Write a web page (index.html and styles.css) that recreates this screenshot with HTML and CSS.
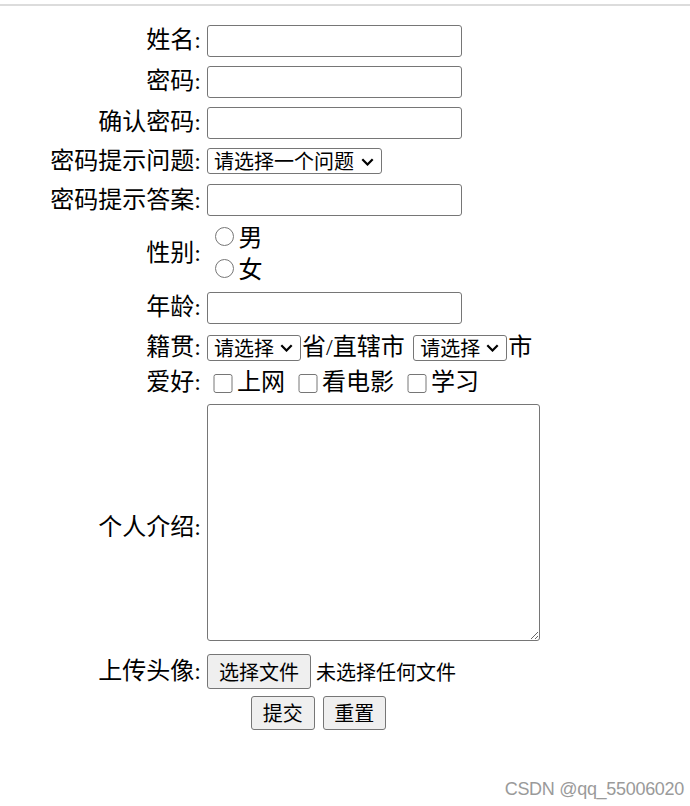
FILE: index.html
```html
<!DOCTYPE html>
<html lang="zh-CN">
<head>
<meta charset="utf-8">
<title>注册</title>
<link rel="stylesheet" href="styles.css">
</head>
<body>
<div class="top-rule"></div>
<form class="reg" action="#">
  <div class="lbl">姓名:</div>
  <div class="fld"><input class="txt" type="text"></div>

  <div class="lbl">密码:</div>
  <div class="fld"><input class="txt" type="password"></div>

  <div class="lbl">确认密码:</div>
  <div class="fld"><input class="txt" type="password"></div>

  <div class="lbl">密码提示问题:</div>
  <div class="fld">
    <span class="sel-box">
      <select class="sel sel-q"><option>请选择一个问题</option></select>
      <svg class="chev" width="13" height="8" viewBox="0 0 13 8" aria-hidden="true"><path d="M1.3 1.3 L6.5 6.5 L11.7 1.3" fill="none" stroke="#000" stroke-width="2.2"/></svg>
    </span>
  </div>

  <div class="lbl">密码提示答案:</div>
  <div class="fld"><input class="txt" type="text"></div>

  <div class="lbl">性别:</div>
  <div class="fld fld-col">
    <label class="radio-line"><input type="radio" name="sex">男</label>
    <label class="radio-line"><input type="radio" name="sex">女</label>
  </div>

  <div class="lbl">年龄:</div>
  <div class="fld"><input class="txt" type="text"></div>

  <div class="lbl">籍贯:</div>
  <div class="fld">
    <span class="sel-box">
      <select class="sel sel-s"><option>请选择</option></select>
      <svg class="chev" width="13" height="8" viewBox="0 0 13 8" aria-hidden="true"><path d="M1.3 1.3 L6.5 6.5 L11.7 1.3" fill="none" stroke="#000" stroke-width="2.2"/></svg>
    </span><span class="unit">省/直辖市</span><span class="sel-box sel-city">
      <select class="sel sel-s"><option>请选择</option></select>
      <svg class="chev" width="13" height="8" viewBox="0 0 13 8" aria-hidden="true"><path d="M1.3 1.3 L6.5 6.5 L11.7 1.3" fill="none" stroke="#000" stroke-width="2.2"/></svg>
    </span><span class="unit">市</span>
  </div>

  <div class="lbl">爱好:</div>
  <div class="fld">
    <label class="opt"><input type="checkbox">上网</label>
    <label class="opt"><input type="checkbox">看电影</label>
    <label class="opt"><input type="checkbox">学习</label>
  </div>

  <div class="lbl lbl-area">个人介绍:</div>
  <div class="fld fld-area"><textarea class="area"></textarea></div>

  <div class="lbl">上传头像:</div>
  <div class="fld">
    <button class="btn btn-file" type="button">选择文件</button><span class="file-note">未选择任何文件</span>
  </div>

  <div class="actions">
    <button class="btn btn-act" type="submit">提交</button>
    <button class="btn btn-act" type="reset">重置</button>
  </div>
</form>
<div class="watermark">CSDN @qq_55006020</div>
</body>
</html>
```

FILE: styles.css
```css
* {
  box-sizing: border-box;
}

body {
  margin: 0;
  background: #ffffff;
  color: #000000;
  font-family: "Liberation Serif", "Noto Sans CJK SC", serif;
  position: relative;
  min-height: 806px;
}

.top-rule {
  height: 2px;
  margin-top: 4px;
  background: #dcdcdc;
}

.reg {
  display: grid;
  grid-template-columns: 167px 390px;
  grid-template-rows: 41px 40.5px 41.5px 35.5px 42.5px 65px 43px 36.5px 33.5px 250px 44px 38.5px;
  margin: 14.5px 0 0 40px;
  width: 557px;
  font-size: 24px;
  line-height: 31.5px;
}

.lbl {
  display: flex;
  align-items: center;
  justify-content: flex-end;
  padding-right: 6px;
  white-space: nowrap;
}

.lbl-area {
  padding-top: 6px;
}

.fld {
  display: flex;
  align-items: center;
  white-space: nowrap;
}

.fld-col {
  flex-direction: column;
  align-items: flex-start;
  justify-content: center;
}

.fld-area {
  padding-bottom: 4px;
}

.txt {
  width: 255px;
  height: 32px;
  margin: 0;
  padding: 1.5px 3px;
  border: 1px solid #767676;
  border-radius: 3px;
  background: #ffffff;
  font-family: "Noto Sans CJK SC", sans-serif;
  font-size: 20px;
}

.sel-box {
  position: relative;
  display: inline-flex;
}

.sel {
  -webkit-appearance: none;
  appearance: none;
  height: 26px;
  margin: 0;
  padding: 0 24px 0 6px;
  border: 1px solid #767676;
  border-radius: 3px;
  background: #ffffff;
  color: #000000;
  font-family: "Noto Sans CJK SC", sans-serif;
  font-size: 20px;
  line-height: 24px;
}

.chev {
  position: absolute;
  right: 8px;
  top: 9.5px;
  pointer-events: none;
}

.sel-q {
  width: 175px;
}

.sel-s {
  width: 94px;
}

.sel-city {
  margin-left: 8.5px;
}

.unit {
  margin-left: 1px;
}

.radio-line {
  display: block;
  line-height: 31px;
}

.radio-line input {
  width: 19.5px;
  height: 19.5px;
  margin: 4.5px 4.5px 0 7.5px;
}

.opt {
  display: flex;
  align-items: center;
}

.opt + .opt {
  margin-left: 7px;
}

.opt input {
  width: 19.5px;
  height: 19.5px;
  margin: 1px 4.5px 0 6px;
}

.area {
  width: 333px;
  height: 237px;
  margin: 0;
  border: 1px solid #767676;
  border-radius: 3px;
  background: #ffffff;
}

.btn {
  margin: 0;
  padding: 0;
  border: 1px solid #767676;
  border-radius: 3px;
  background: #efefef;
  color: #000000;
  font-family: "Noto Sans CJK SC", sans-serif;
  font-size: 20px;
  line-height: 26px;
}

.btn-file {
  width: 104px;
  height: 34.5px;
}

.file-note {
  margin-left: 5px;
  font-family: "Noto Sans CJK SC", sans-serif;
  font-size: 20px;
}

.actions {
  grid-column: 1 / 3;
  display: flex;
  justify-content: center;
  align-items: center;
  gap: 8px;
}

.btn-act {
  width: 63.5px;
  height: 34px;
}

.watermark {
  position: absolute;
  top: 779px;
  right: 6px;
  font-family: "Liberation Sans", Arial, sans-serif;
  font-size: 18px;
  line-height: 20px;
  letter-spacing: -0.3px;
  color: #9a9a9a;
}
```
